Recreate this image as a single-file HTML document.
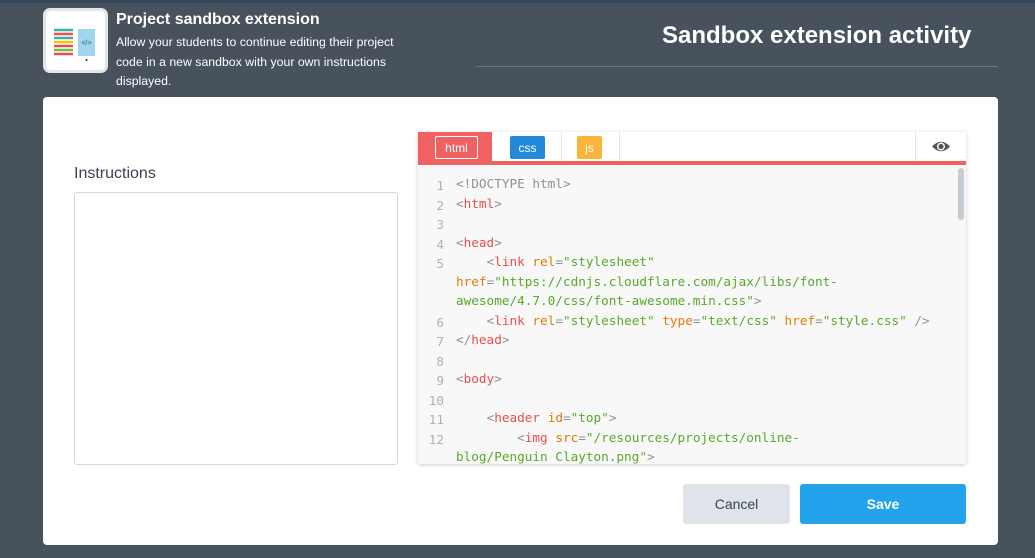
<!DOCTYPE html>
<html><head><style>
*{margin:0;padding:0;box-sizing:border-box}
body{width:1035px;height:558px;background:#47525c;font-family:"Liberation Sans",sans-serif;position:relative;overflow:hidden}
.top{position:absolute;left:0;top:0;width:1035px;height:3px;background:#34495e}
.icon{position:absolute;left:43px;top:8px;width:65px;height:65px;background:#fff;border:3px solid #e2e6ea;border-radius:7px}
.t1{position:absolute;left:116px;top:11px;color:#fff;font-weight:bold;font-size:16px}
.t2{position:absolute;left:116px;top:33px;color:#fff;font-size:12.3px;line-height:19.5px;width:300px}
.h{position:absolute;left:662px;top:22px;color:#fff;font-weight:bold;font-size:24px}
.rule{position:absolute;left:476px;top:66px;width:522px;height:1px;background:#6b7680}
.panel{position:absolute;left:43px;top:97px;width:955px;height:448px;background:#fff;border-radius:4px}
.lab{position:absolute;left:74px;top:165px;font-size:16px;color:#3a4450}
.ta{position:absolute;left:74px;top:192px;width:324px;height:273px;border:1px solid #d3d8e0;border-radius:3px}
.ed{position:absolute;left:418px;top:132px;width:548px;height:332px;background:#f8f8f8;box-shadow:0 1px 4px rgba(0,0,0,.2);overflow:hidden}
.tabs{height:33px;background:#fff;border-bottom:4px solid #f06262;position:relative}
.tab{position:absolute;top:0;height:29px}
.b{position:absolute;top:4px;height:23px;font-size:12px;color:#fff;display:flex;align-items:center;justify-content:center;border-radius:2px}
.code{position:absolute;top:44px;left:0;font-family:"DejaVu Sans Mono","Liberation Mono",monospace;font-size:12.7px;line-height:19.5px;white-space:pre}
.ln{position:absolute;left:0;width:26px;text-align:right;color:#aab2bd}
.tx{position:absolute;left:38px;color:#888}
.r{color:#e94e4e}.o{color:#e07b00}.g{color:#5aa82b}.k{color:#8a929a}
.sb{position:absolute;right:2px;top:36px;width:6px;height:52px;background:#c6ccd3;border-radius:3px}
.cancel{position:absolute;left:683px;top:484px;width:107px;height:40px;background:#dfe3ea;border-radius:3px;color:#3a4450;font-size:14px;text-align:center;line-height:40px}
.save{position:absolute;left:800px;top:484px;width:166px;height:40px;background:#22a3ec;border-radius:3px;color:#fff;font-weight:bold;font-size:14px;text-align:center;line-height:40px}
</style></head><body>
<div class="top"></div>
<div class="icon"><svg width="59" height="59" viewBox="0 0 59 59">
<g stroke-width="2.5"><line x1="8" y1="19" x2="27" y2="19" stroke="#3ab0a0"/><line x1="8" y1="23" x2="27" y2="23" stroke="#e85050"/><line x1="8" y1="27" x2="27" y2="27" stroke="#3ab0a0"/><line x1="8" y1="31" x2="27" y2="31" stroke="#f5c400"/><line x1="8" y1="35" x2="27" y2="35" stroke="#e85050"/><line x1="8" y1="39" x2="27" y2="39" stroke="#6cbf3c"/><line x1="8" y1="43" x2="27" y2="43" stroke="#e85050"/></g>
<rect x="32" y="18" width="17" height="27" fill="#9fd6ef"/><text x="40.5" y="34" font-size="7" text-anchor="middle" fill="#356">&lt;/&gt;</text><circle cx="40.5" cy="49" r="1" fill="#222"/></svg></div>
<div class="t1">Project sandbox extension</div>
<div class="t2">Allow your students to continue editing their project code in a new sandbox with your own instructions displayed.</div>
<div class="h">Sandbox extension activity</div>
<div class="rule"></div>
<div class="panel"></div>
<div class="lab">Instructions</div>
<div class="ta"></div>
<div class="ed">
<div class="tabs">
<div class="tab" style="left:0;width:74px;background:#f06262"></div>
<div class="b" style="left:17px;width:43px;border:1px solid #fff">html</div>
<div class="tab" style="left:143px;width:1px;background:#e3e6ea"></div>
<div class="b" style="left:92px;width:35px;background:#2389d8">css</div>
<div class="b" style="left:159px;width:25px;background:#fbb43a">js</div>
<div class="tab" style="left:201px;width:1px;background:#e3e6ea"></div>
<div class="tab" style="left:497px;width:1px;background:#e3e6ea"></div>
<svg style="position:absolute;left:513px;top:7px" width="20" height="15" viewBox="0 0 20 15"><path d="M1 7.5Q10-2 19 7.5Q10 17 1 7.5Z" fill="#555"/><circle cx="10" cy="7.5" r="4" fill="#fff"/><circle cx="10" cy="7.5" r="2.6" fill="#555"/></svg>
</div>
<div class="sb"></div>
<div class="code">
<div class="ln" style="top:0">1</div><div class="tx k" style="top:-2px">&lt;!DOCTYPE html&gt;</div>
<div class="ln" style="top:19.5px">2</div><div class="tx" style="top:17.5px"><span class="k">&lt;</span><span class="r">html</span><span class="k">&gt;</span></div>
<div class="ln" style="top:39px">3</div>
<div class="ln" style="top:58.5px">4</div><div class="tx" style="top:56.5px"><span class="k">&lt;</span><span class="r">head</span><span class="k">&gt;</span></div>
<div class="ln" style="top:78px">5</div><div class="tx" style="top:76px">    <span class="k">&lt;</span><span class="r">link</span> <span class="o">rel</span><span class="k">=</span><span class="g">"stylesheet"</span>
<span class="o">href</span><span class="k">=</span><span class="g">"https://cdnjs.cloudflare.com/ajax/libs/font-</span>
<span class="g">awesome/4.7.0/css/font-awesome.min.css"</span><span class="k">&gt;</span></div>
<div class="ln" style="top:136.5px">6</div><div class="tx" style="top:134.5px">    <span class="k">&lt;</span><span class="r">link</span> <span class="o">rel</span><span class="k">=</span><span class="g">"stylesheet"</span> <span class="o">type</span><span class="k">=</span><span class="g">"text/css"</span> <span class="o">href</span><span class="k">=</span><span class="g">"style.css"</span> <span class="k">/&gt;</span></div>
<div class="ln" style="top:156px">7</div><div class="tx" style="top:154px"><span class="k">&lt;/</span><span class="r">head</span><span class="k">&gt;</span></div>
<div class="ln" style="top:175.5px">8</div>
<div class="ln" style="top:195px">9</div><div class="tx" style="top:193px"><span class="k">&lt;</span><span class="r">body</span><span class="k">&gt;</span></div>
<div class="ln" style="top:214.5px">10</div>
<div class="ln" style="top:234px">11</div><div class="tx" style="top:232px">    <span class="k">&lt;</span><span class="r">header</span> <span class="o">id</span><span class="k">=</span><span class="g">"top"</span><span class="k">&gt;</span></div>
<div class="ln" style="top:253.5px">12</div><div class="tx" style="top:251.5px">        <span class="k">&lt;</span><span class="r">img</span> <span class="o">src</span><span class="k">=</span><span class="g">"/resources/projects/online-</span>
<span class="g">blog/Penguin Clayton.png"</span><span class="k">&gt;</span></div>
</div>
</div>
<div class="cancel">Cancel</div>
<div class="save">Save</div>
</body></html>
